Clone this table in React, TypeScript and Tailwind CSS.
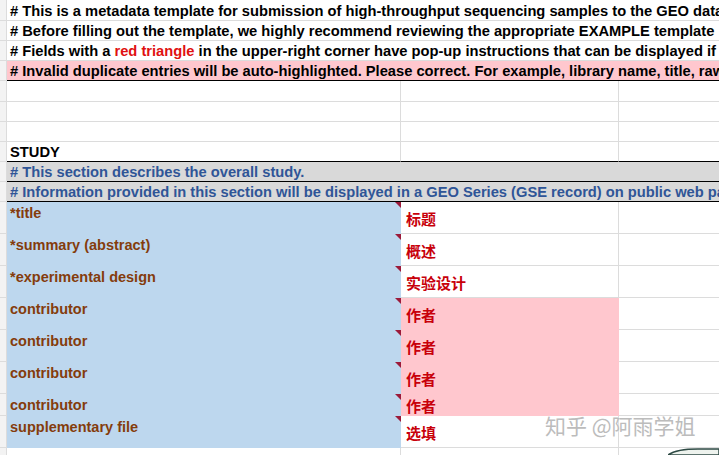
import React from "react";

const GRID = "border-[#dcdcdc]";

type Field = {
  label: string;
  zh: string;
  h: string;
  pink?: boolean;
};

const FIELDS: Field[] = [
  { label: "*title", zh: "标题", h: "h-[32px]" },
  { label: "*summary (abstract)", zh: "概述", h: "h-[32px]" },
  { label: "*experimental design", zh: "实验设计", h: "h-[32px]" },
  { label: "contributor", zh: "作者", h: "h-[32px]", pink: true },
  { label: "contributor", zh: "作者", h: "h-[32px]", pink: true },
  { label: "contributor", zh: "作者", h: "h-[32px]", pink: true },
  { label: "contributor", zh: "作者", h: "h-[22px]", pink: true },
  { label: "supplementary file", zh: "选填", h: "h-[32px]" },
];

function Gutter() {
  return <div className={`w-[7px] shrink-0 bg-[#f3f3f3] border-r border-b ${GRID}`} />;
}

// row whose text overflows across the columns
function WideRow({
  h,
  bg = "bg-white",
  border = "border-[#dcdcdc]",
  children,
}: {
  h: string;
  bg?: string;
  border?: string;
  children: React.ReactNode;
}) {
  return (
    <div className={`flex ${h}`}>
      <Gutter />
      <div
        className={`flex-1 flex items-center pl-[3px] pt-[2px] text-[14.7px] whitespace-nowrap overflow-hidden border-b ${bg} ${border}`}
      >
        {children}
      </div>
    </div>
  );
}

function EmptyRow({ h, children, border = GRID }: { h: string; children?: React.ReactNode; border?: string }) {
  return (
    <div className={`flex ${h}`}>
      <Gutter />
      <div className={`w-[394px] shrink-0 flex items-center pl-[3px] pt-[1px] text-[14.7px] border-r border-b ${GRID} ${border}`}>
        {children}
      </div>
      <div className={`w-[218px] shrink-0 border-r border-b ${GRID} ${border}`} />
      <div className={`flex-1 border-b ${GRID} ${border}`} />
    </div>
  );
}

function Marker() {
  return (
    <svg className="absolute top-0 right-0" width="6" height="6" viewBox="0 0 6 6">
      <polygon points="0,0 6,0 6,6" fill="#9c1a3a" />
    </svg>
  );
}

function FieldRow({ f }: { f: Field }) {
  return (
    <div className={`flex ${f.h}`}>
      <Gutter />
      <div className="relative w-[394px] shrink-0 bg-[#bdd7ee] pl-[3px] pt-[2px] leading-[18px] text-[14.5px] font-bold text-[#843c0c]">
        {f.label}
        <Marker />
      </div>
      <div
        className={`w-[218px] shrink-0 flex items-center pl-[5px] pt-[3px] text-[15px] font-bold text-[#c8000a] font-['Noto_Sans_CJK_SC',sans-serif] ${
          f.pink ? "bg-[#ffc7ce]" : `bg-white border-r border-b ${GRID}`
        }`}
      >
        {f.zh}
      </div>
      <div className={`flex-1 border-b ${GRID}`} />
    </div>
  );
}

export default function App() {
  return (
    <div className="relative w-[719px] h-[455px] overflow-hidden bg-white text-[14px] text-black font-['Liberation_Sans',Arial,sans-serif]">
      <WideRow h="h-[21px]">
        <b># This is a metadata template for submission of high-throughput sequencing samples to the GEO database</b>
      </WideRow>
      <WideRow h="h-[20px]">
        <b># Before filling out the template, we highly recommend reviewing the appropriate EXAMPLE template</b>
      </WideRow>
      <WideRow h="h-[20px]">
        <b>
          # Fields with a <span className="text-[#e01010]">red triangle</span> in the upper-right corner have pop-up
          instructions that can be displayed if
        </b>
      </WideRow>
      <WideRow h="h-[20px]" bg="bg-[#ffc7ce]" border="border-black">
        <b># Invalid duplicate entries will be auto-highlighted. Please correct. For example, library name, title, raw</b>
      </WideRow>

      <EmptyRow h="h-[21px]" />
      <EmptyRow h="h-[20px]" />
      <EmptyRow h="h-[20px]" />
      <EmptyRow h="h-[20px]" border="border-b-black">
        <b>STUDY</b>
      </EmptyRow>

      <WideRow h="h-[20px]" bg="bg-[#d9d9d9]" border="border-black">
        <b className="text-[#2f5597]"># This section describes the overall study.</b>
      </WideRow>
      <WideRow h="h-[20px]" bg="bg-[#d9d9d9]" border="border-black">
        <b className="text-[#2f5597]">
          # Information provided in this section will be displayed in a GEO Series (GSE record) on public web pages
        </b>
      </WideRow>

      {FIELDS.map((f, i) => (
        <FieldRow key={i} f={f} />
      ))}

      <EmptyRow h="h-[32px]" />

      {/* watermark */}
      <div className="absolute left-[545px] top-[410px] text-[21px] text-[#bcbcbc] whitespace-nowrap font-['Noto_Sans_CJK_SC',sans-serif] [text-shadow:0_0_2px_#fff]">
        知乎 @阿雨学姐
      </div>

      {/* shape peeking in at the bottom right */}
      <svg className="absolute left-[668px] top-[447px]" width="51" height="8" viewBox="0 0 51 8">
        <path d="M0,8 Q8,2 30,2 L51,2 L51,8 Z" fill="#eef3ee" stroke="#2e4a44" strokeWidth="1.5" />
      </svg>
    </div>
  );
}
